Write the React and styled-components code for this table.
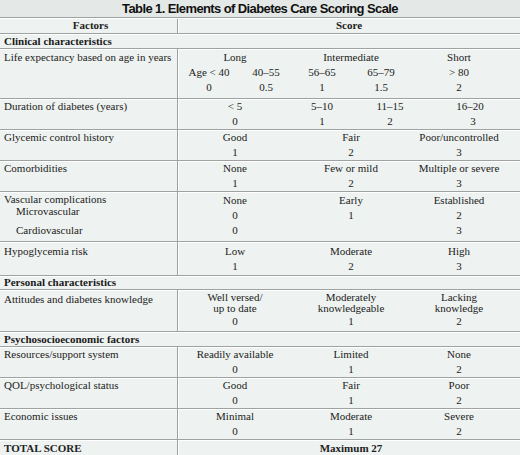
import React from 'react';
import styled, { createGlobalStyle } from 'styled-components';

const GlobalStyle = createGlobalStyle`
  html, body {
    margin: 0;
    padding: 0;
    background: #eef2f0;
  }
  body {
    font-family: "Liberation Serif", "Times New Roman", serif;
    color: #222;
  }
`;

const LINE = '#9ea3a1';

const Sheet = styled.div`
  width: 520px;
  height: 455px;
  overflow: hidden;
  background: #eef2f0;
`;

const Title = styled.h1`
  margin: 0;
  height: 17px;
  font: bold 13px/17px "Liberation Sans", Arial, sans-serif;
  letter-spacing: -0.6px;
  text-align: center;
  color: #111;
  background: #e4e9e7;
  border-bottom: 1px solid ${LINE};
  box-shadow: 0 1px 0 #fff;
  position: relative;
`;

const Row = styled.div`
  display: grid;
  grid-template-columns: 178px 1fr;
  border-bottom: 1px solid ${LINE};
  box-shadow: 0 1px 0 #fff;
  font-size: 11px;
`;

const Section = styled.div`
  padding: 0 0 0 4px;
  line-height: ${p => p.$h}px;
  font-size: 11px;
  font-weight: bold;
  color: #1a1a1a;
  border-bottom: 1px solid ${LINE};
  box-shadow: 0 1px 0 #fff;
`;

const Factor = styled.div`
  padding: ${p => p.$pad};
  padding-left: 4px;
  border-right: 1px solid ${LINE};
  box-shadow: 1px 0 0 #fff;
  line-height: 15px;
  font-weight: ${p => (p.$bold ? 'bold' : 'normal')};
  text-align: ${p => (p.$center ? 'center' : 'left')};
`;

const Sub = styled.div`
  line-height: ${p => p.$lh || 15}px;
  padding-left: ${p => (p.$indent ? 12 : 0)}px;
  margin-top: ${p => p.$gap || 0}px;
`;

const Scores = styled.div`
  padding: ${p => p.$pad};
  display: flex;
  flex-direction: column;
`;

const Line = styled.div`
  display: grid;
  grid-template-columns: 62px 52px 60px 58px 110px;
  line-height: ${p => p.$lh}px;
`;

const Cell = styled.div`
  grid-column: ${p => p.$c};
  text-align: center;
  white-space: pre-line;
  padding-left: ${p => p.$nudge || 0}px;
  padding-right: ${p => (p.$last ? 12 : 0)}px;
  font-weight: ${p => (p.$bold ? 'bold' : 'normal')};
`;

const tri = (a, b, c) => [
  [a, '1 / 3'],
  [b, '3 / 5'],
  [c, '5 / 6'],
];

const rows = [
  { section: 'Clinical characteristics', h: 14 },
  {
    factor: [{ t: 'Life expectancy based on age in years' }],
    pad: '1px 0 3px',
    lines: [
      tri('Long', 'Intermediate', 'Short'),
      [['Age < 40', '1'], ['40–55', '2'], ['56–65', '3'], ['65–79', '4'], ['> 80', '5']],
      [['0', '1'], ['0.5', '2'], ['1', '3'], ['1.5', '4'], ['2', '5']],
    ],
  },
  {
    factor: [{ t: 'Duration of diabetes (years)' }],
    pad: '0',
    lines: [
      [['< 5', '1 / 3'], ['5–10', '3'], ['11–15', '4', 18], ['16–20', '5', 22]],
      [['0', '1 / 3'], ['1', '3'], ['2', '4', 18], ['3', '5', 28]],
    ],
  },
  { factor: [{ t: 'Glycemic control history' }], pad: '0', lines: [tri('Good', 'Fair', 'Poor/uncontrolled'), tri('1', '2', '3')] },
  { factor: [{ t: 'Comorbidities' }], pad: '0', lines: [tri('None', 'Few or mild', 'Multiple or severe'), tri('1', '2', '3')] },
  {
    factor: [
      { t: 'Vascular complications', lh: 12 },
      { t: 'Microvascular', lh: 12, indent: true },
      { t: 'Cardiovascular', indent: true, gap: 6 },
    ],
    pad: '1px 0 3px',
    lines: [tri('None', 'Early', 'Established'), tri('0', '1', '2'), tri('0', '', '3')],
  },
  { factor: [{ t: 'Hypoglycemia risk' }], pad: '2px 0 1px', lines: [tri('Low', 'Moderate', 'High'), tri('1', '2', '3')] },
  { section: 'Personal characteristics', h: 13 },
  {
    factor: [{ t: 'Attitudes and diabetes knowledge' }],
    pad: '2px 0 2px',
    lines: [
      { lh: 11, cells: tri('Well versed/\nup to date', 'Moderately\nknowledgeable', 'Lacking\nknowledge') },
      tri('0', '1', '2'),
    ],
  },
  { section: 'Psychosocioeconomic factors', h: 14 },
  { factor: [{ t: 'Resources/support system' }], pad: '0', lines: [tri('Readily available', 'Limited', 'None'), tri('0', '1', '2')] },
  { factor: [{ t: 'QOL/psychological status' }], pad: '0', lines: [tri('Good', 'Fair', 'Poor'), tri('0', '1', '2')] },
  { factor: [{ t: 'Economic issues' }], pad: '0', lines: [tri('Minimal', 'Moderate', 'Severe'), tri('0', '1', '2')] },
];

const ScoreLine = ({ line }) => {
  const lh = line.lh || 15;
  const cells = line.cells || line;
  return (
    <Line $lh={lh}>
      {cells.map(([t, c, nudge], i) => (
        <Cell key={i} $c={c} $nudge={nudge} $last={c.startsWith('5')}>
          {t}
        </Cell>
      ))}
    </Line>
  );
};

const App = () => (
  <Sheet>
    <GlobalStyle />
    <Title>Table 1. Elements of Diabetes Care Scoring Scale</Title>
    <Row>
      <Factor $pad="0" $bold $center>Factors</Factor>
      <Scores $pad="0">
        <Line $lh={15}>
          <Cell $c="1 / 6" $bold>Score</Cell>
        </Line>
      </Scores>
    </Row>
    {rows.map((r, i) =>
      r.section ? (
        <Section key={i} $h={r.h}>{r.section}</Section>
      ) : (
        <Row key={i}>
          <Factor $pad={r.pad}>
            {r.factor.map((f, j) => (
              <Sub key={j} $lh={f.lh} $indent={f.indent} $gap={f.gap}>
                {f.t}
              </Sub>
            ))}
          </Factor>
          <Scores $pad={r.pad}>
            {r.lines.map((l, j) => (
              <ScoreLine key={j} line={l} />
            ))}
          </Scores>
        </Row>
      )
    )}
    <Row>
      <Factor $pad="1px 0 2px" $bold>TOTAL SCORE</Factor>
      <Scores $pad="1px 0 2px">
        <Line $lh={15}>
          <Cell $c="3 / 5" $bold>Maximum 27</Cell>
        </Line>
      </Scores>
    </Row>
  </Sheet>
);

export default App;
